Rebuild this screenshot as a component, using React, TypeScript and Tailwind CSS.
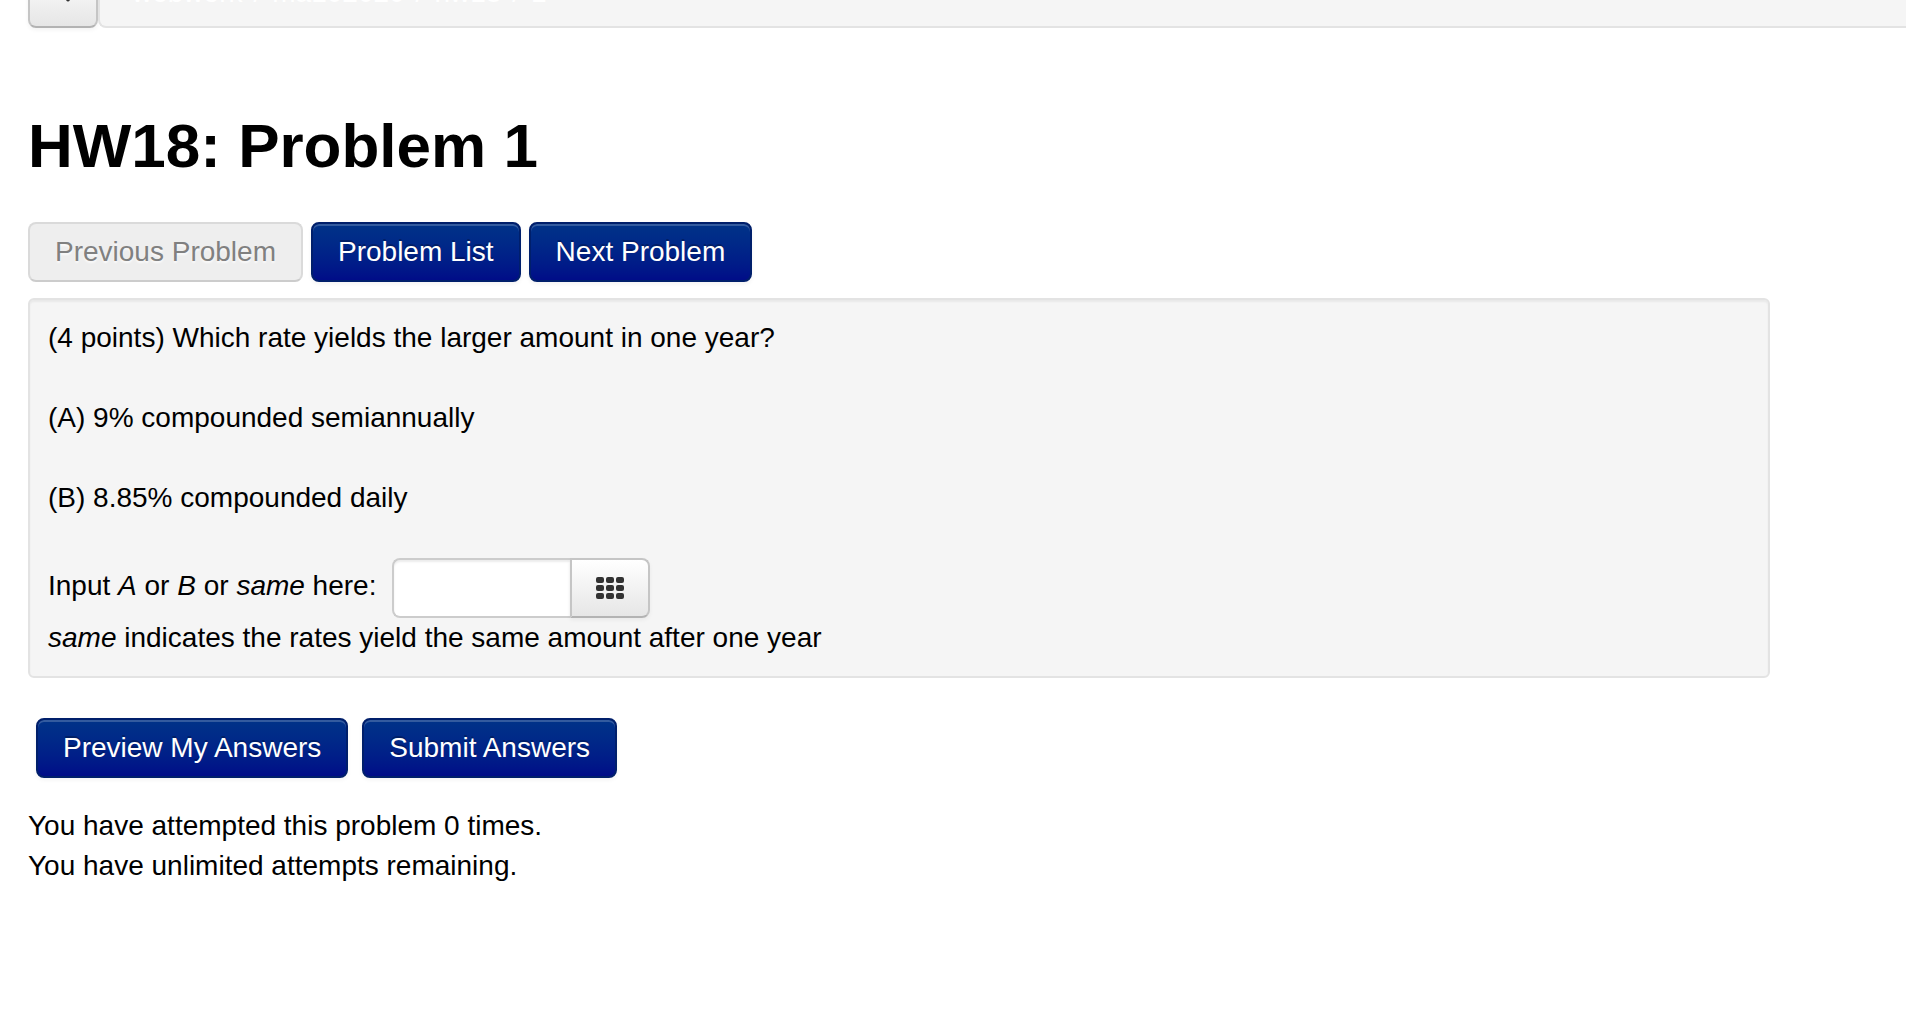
import type { ReactNode } from "react";

const CRUMBS = ["webwork", "ma102020", "hw18"];

const BTN =
  "h-[60px] rounded-lg border-2 px-[25px] text-[28px] leading-10 text-center whitespace-nowrap";

function PrimaryButton({ children }: { children: ReactNode }) {
  return (
    <button
      type="button"
      className={`${BTN} border-[#001f6b] bg-linear-to-b from-[#003388] to-[#000c88] text-white [text-shadow:0_-2px_0_rgba(0,0,0,0.25)] shadow-[inset_0_2px_0_rgba(255,255,255,0.2),0_2px_4px_rgba(0,0,0,0.05)]`}
    >
      {children}
    </button>
  );
}

function ArrowIcon() {
  return (
    <svg width="28" height="28" viewBox="0 0 28 28" fill="#333" aria-hidden="true">
      <path d="M17 2l9 11-5 13q-2 3-4 0v-9H4v-7h13z" />
    </svg>
  );
}

function KeypadIcon() {
  return (
    <svg width="28" height="22" viewBox="0 0 28 22" fill="#333" aria-hidden="true">
      {[0, 8, 16].map((y) =>
        [0, 10, 20].map((x) => (
          <rect key={`${x}-${y}`} x={x} y={y} width="8" height="6" rx="2" />
        ))
      )}
    </svg>
  );
}

export default function App() {
  return (
    <div className="overflow-hidden bg-white pl-7 font-['Liberation_Sans',Arial,sans-serif] text-[28px] leading-10 text-black">
      {/* Top bar, scrolled almost out of view */}
      <nav aria-label="Breadcrumb" className="-mt-8 flex h-[60px]">
        <button
          type="button"
          aria-label="Toggle menu"
          className="flex w-[70px] items-start justify-center rounded-lg border-2 border-[#c5c5c5] border-b-[#b3b3b3] bg-linear-to-b from-white to-[#e6e6e6] pt-1 shadow-[0_2px_4px_rgba(0,0,0,0.05)]"
        >
          <ArrowIcon />
        </button>
        <ol className="flex flex-1 rounded-l-lg border-2 border-r-0 border-[#e3e3e3] bg-[#f5f5f5] pt-px pl-8 [text-shadow:0_2px_0_#fff]">
          {CRUMBS.map((name) => (
            <li key={name} className="flex">
              <a href="#" className="text-[#0a4fc4]">
                {name}
              </a>
              <span className="px-[11px] text-[#777]">/</span>
            </li>
          ))}
          <li className="text-[#ccc]">1</li>
        </ol>
      </nav>

      <main>
        <h1 className="mt-[78px] text-[62px] leading-20 font-bold">HW18: Problem 1</h1>

        <div className="mt-9 flex gap-2">
          <button
            type="button"
            disabled
            className={`${BTN} border-[#dadada] border-b-[#cccccc] bg-[#eeeeee] text-[#808080] [text-shadow:0_2px_2px_rgba(255,255,255,0.75)]`}
          >
            Previous Problem
          </button>
          <PrimaryButton>Problem List</PrimaryButton>
          <PrimaryButton>Next Problem</PrimaryButton>
        </div>

        <section className="mt-4 mr-[136px] rounded-md border-2 border-[#e3e3e3] bg-[#f5f5f5] p-[18px] shadow-[inset_0_2px_2px_rgba(0,0,0,0.05)]">
          <p className="mb-10">(4 points) Which rate yields the larger amount in one year?</p>
          <p className="mb-10">(A) 9% compounded semiannually</p>
          <p className="mb-10">(B) 8.85% compounded daily</p>
          <div className="flex items-start">
            <label htmlFor="answer" className="pt-2">
              Input <i>A</i> or <i>B</i> or <i>same</i> here:
            </label>
            <div className="ml-4 flex">
              <input
                id="answer"
                type="text"
                className="h-[60px] w-[178px] rounded-l-lg border-2 border-r-0 border-[#cccccc] bg-white px-3 shadow-[inset_0_2px_2px_rgba(0,0,0,0.075)] outline-none"
              />
              <button
                type="button"
                aria-label="Open equation editor"
                className="flex h-[60px] w-20 items-center justify-center rounded-r-lg border-2 border-[#c5c5c5] border-b-[#b3b3b3] bg-linear-to-b from-white to-[#e6e6e6] shadow-[0_2px_4px_rgba(0,0,0,0.05)]"
              >
                <KeypadIcon />
              </button>
            </div>
          </div>
          <p>
            <i>same</i> indicates the rates yield the same amount after one year
          </p>
        </section>

        <div className="mt-10 ml-2 flex gap-[14px]">
          <PrimaryButton>Preview My Answers</PrimaryButton>
          <PrimaryButton>Submit Answers</PrimaryButton>
        </div>

        <p className="mt-7">
          You have attempted this problem 0 times.
          <br />
          You have unlimited attempts remaining.
        </p>
      </main>
    </div>
  );
}
